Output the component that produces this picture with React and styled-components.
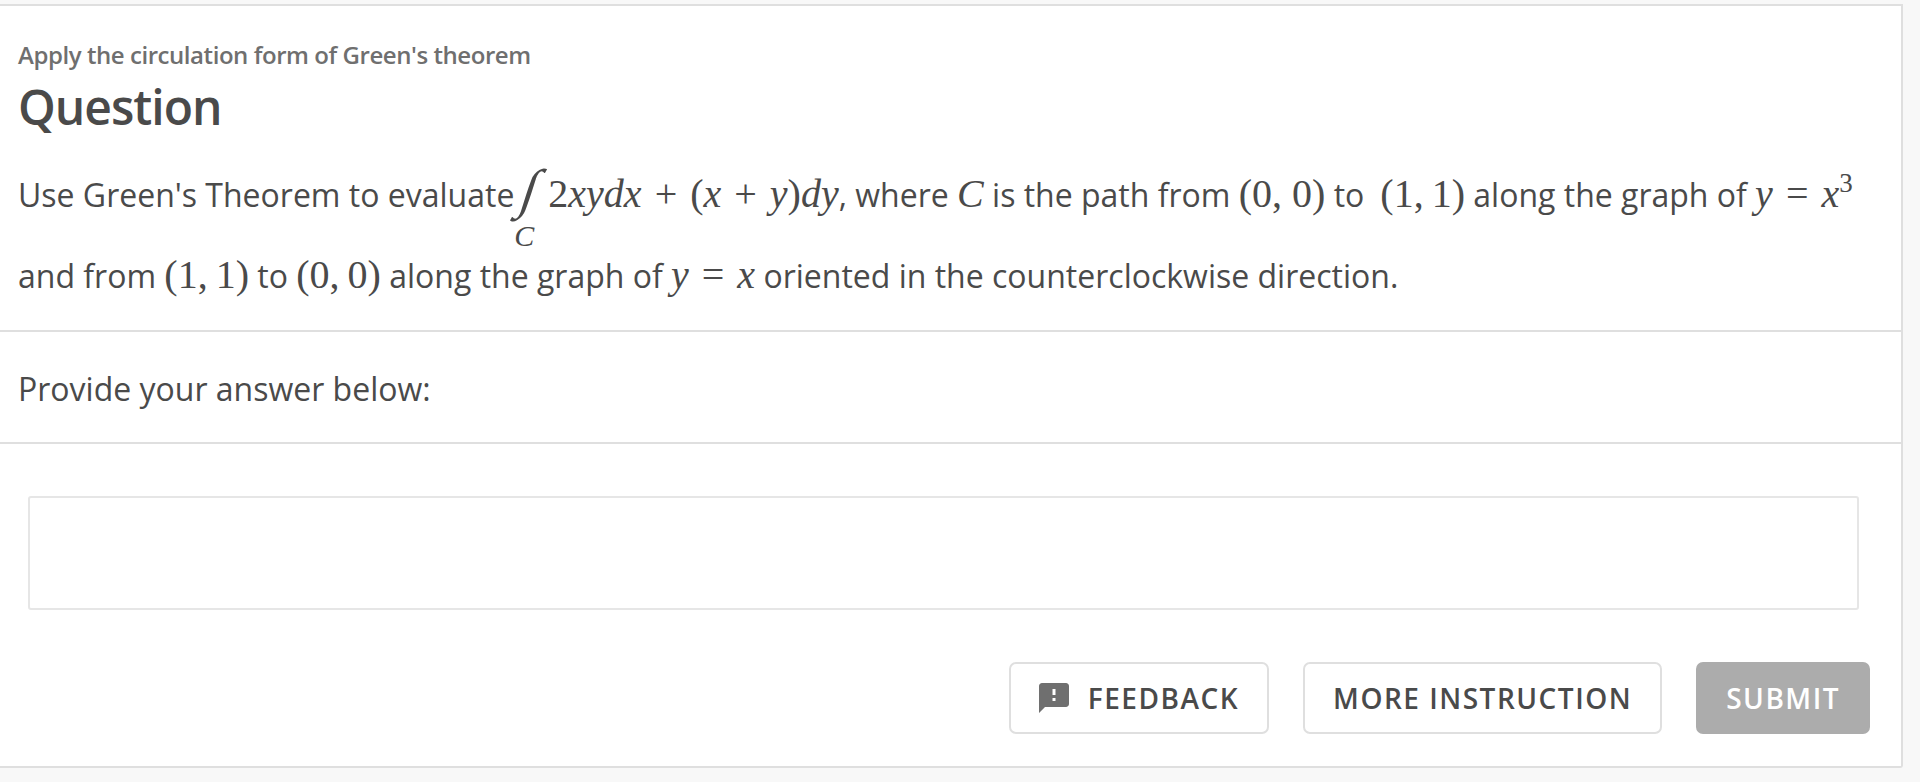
import React from 'react';
import styled, { createGlobalStyle } from 'styled-components';
import { MdFeedback } from 'react-icons/md';

const GlobalStyle = createGlobalStyle`
    html, body {
        margin: 0;
        padding: 0;
        background: #f8f8f8;
        font-family: "Open Sans", "Liberation Sans", sans-serif;
        color: #4a4a4a;
    }
`;

const Page = styled.div`
    padding: 4px 17px 0 0;
    height: 778px;
    overflow: hidden;
`;

const Card = styled.div`
    background: #fff;
    border: 2px solid #dfdfdf;
    border-left: none;
    border-radius: 0 0 3px 0;
    height: 764px;
    box-sizing: border-box;
`;

const QuestionSection = styled.section`
    padding: 33px 18px 0;
    height: 326px;
    box-sizing: border-box;
    border-bottom: 2px solid #dfdfdf;
`;

const Subject = styled.div`
    font-size: 24px;
    line-height: 32px;
    font-weight: 600;
    letter-spacing: -0.44px;
    color: #6f6f6f;
`;

const Title = styled.h1`
    margin: 4px 0 0;
    font-size: 48px;
    line-height: 64px;
    font-weight: 600;
    letter-spacing: -1px;
    color: #4a4a4a;
`;

const Statement = styled.div`
    margin-top: 27px;
    font-size: 32px;
    line-height: 40px;
    white-space: nowrap;
`;

const FirstLine = styled.div`
    height: 89px;
`;

const Math = styled.span`
    font-family: "Liberation Serif", "Times New Roman", serif;
    font-size: 40px;
    word-spacing: ${p => p.$spread || 0}px;
`;

const Var = styled.i`
    font-family: "Liberation Serif", "Times New Roman", serif;
    font-size: 40px;
    font-style: italic;
`;

const Integral = styled.span`
    display: inline-flex;
    flex-direction: column;
    align-items: flex-start;
    width: 34px;
    font-family: "Liberation Serif", "Times New Roman", serif;
`;

const IntegralSign = styled.span`
    font-size: 54px;
    line-height: 46px;
    margin-left: 9px;
    transform: skewX(-18deg);
`;

const IntegralLimit = styled.i`
    font-size: 30px;
    line-height: 28px;
    margin-top: 10px;
`;

const Sup = styled.sup`
    font-family: "Liberation Serif", "Times New Roman", serif;
    font-size: 27px;
    line-height: 0;
    vertical-align: 15px;
`;

const PromptSection = styled.section`
    height: 112px;
    box-sizing: border-box;
    padding: 2px 18px 0;
    display: flex;
    align-items: center;
    font-size: 32px;
    border-bottom: 2px solid #dfdfdf;
`;

const AnswerSection = styled.section`
    padding: 52px 31px 0 28px;
`;

const AnswerBox = styled.div`
    height: 114px;
    margin-right: 11px;
    box-sizing: border-box;
    border: 2px solid #e6e6e6;
    border-radius: 3px;
`;

const Actions = styled.div`
    display: flex;
    justify-content: flex-end;
    gap: 34px;
    padding-top: 52px;
`;

const Button = styled.button`
    height: 72px;
    box-sizing: border-box;
    padding: 0 28px;
    display: flex;
    align-items: center;
    gap: 16px;
    background: ${p => (p.$disabled ? '#acacac' : '#fff')};
    border: 2px solid ${p => (p.$disabled ? '#acacac' : '#dfdfdf')};
    border-radius: 7px;
    color: ${p => (p.$disabled ? '#fff' : '#4a4a4a')};
    font-family: inherit;
    font-size: 28px;
    font-weight: 600;
    letter-spacing: 1.5px;
    white-space: nowrap;
`;

const FeedbackIcon = styled(MdFeedback)`
    width: 36px;
    height: 36px;
    margin-left: -3px;
    color: #6f6f6f;
    flex: none;
`;

const App = () => (
    <Page>
        <GlobalStyle />
        <Card>
            <QuestionSection>
                <Subject>Apply the circulation form of Green's theorem</Subject>
                <Title>Question</Title>
                <Statement>
                    <FirstLine>
                        Use Green's Theorem to evaluate
                        <Integral>
                            <IntegralSign>∫</IntegralSign>
                            <IntegralLimit>C</IntegralLimit>
                        </Integral>
                        <Math>2</Math>
                        <Var>xydx</Var>
                        <Math $spread={3}> + (</Math>
                        <Var>x</Var>
                        <Math $spread={3}> + </Math>
                        <Var>y</Var>
                        <Math>)</Math>
                        <Var>dy</Var>, where <Var>C</Var> is the path from <Math>(0, 0)</Math> to
                        <Math $spread={-2}>{'\u00a0 '}(1, 1)</Math> along the graph of <Var>y</Var>
                        <Math $spread={3}> = </Math>
                        <Var>x</Var>
                        <Sup>3</Sup>
                    </FirstLine>
                    <div>
                        and from <Math $spread={-2}>(1, 1)</Math> to <Math $spread={-2}>(0, 0)</Math> along the graph
                        of <Var>y</Var>
                        <Math $spread={3}> = </Math>
                        <Var>x</Var> oriented in the counterclockwise direction.
                    </div>
                </Statement>
            </QuestionSection>
            <PromptSection>Provide your answer below:</PromptSection>
            <AnswerSection>
                <AnswerBox />
                <Actions>
                    <Button>
                        <FeedbackIcon />
                        FEEDBACK
                    </Button>
                    <Button>MORE INSTRUCTION</Button>
                    <Button $disabled>SUBMIT</Button>
                </Actions>
            </AnswerSection>
        </Card>
    </Page>
);

export default App;
